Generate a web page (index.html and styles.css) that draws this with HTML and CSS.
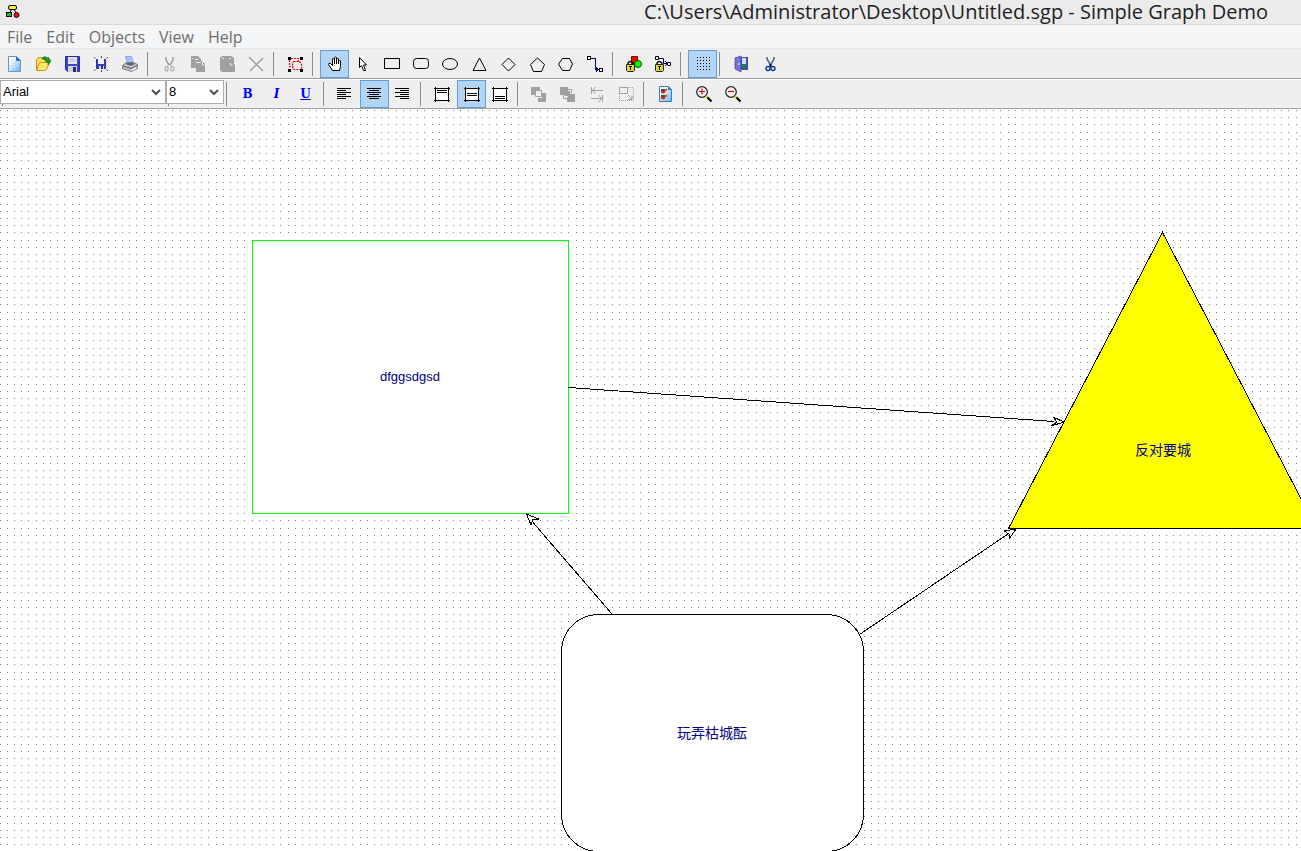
FILE: index.html
```html
<!DOCTYPE html>
<html lang="en">
<head>
<meta charset="utf-8">
<title>Simple Graph Demo</title>
<link rel="stylesheet" href="styles.css">
</head>
<body>
<div class="window">
  <header class="titlebar">
    <svg class="app-icon" viewBox="0 0 14 14" aria-hidden="true">
      <path d="M6 4L3 9M8 4l3 6" stroke="#000080"/>
      <rect x="2.500" y=".5" width="8" height="4" rx="1.500" fill="#ff0" stroke="#000"/>
      <rect x=".5" y="7.500" width="5" height="4" fill="#0c2" stroke="#000"/>
      <circle cx="10.500" cy="10" r="2.500" fill="#f01010" stroke="#400"/>
    </svg>
    <h1 class="title">C:\Users\Administrator\Desktop\Untitled.sgp - Simple Graph Demo</h1>
  </header>

  <nav class="menubar" aria-label="Main menu">
    <button class="menu">File</button>
    <button class="menu">Edit</button>
    <button class="menu">Objects</button>
    <button class="menu">View</button>
    <button class="menu">Help</button>
  </nav>

  <div class="toolbar" role="toolbar" aria-label="Standard">
    <button class="tool" aria-label="New"><svg viewBox="0 0 29 28"><defs><linearGradient id="page" x1="0" y1="0" x2="1" y2="1"><stop offset=".2" stop-color="#fff"/><stop offset="1" stop-color="#62b4ee"/></linearGradient></defs><path d="M8.500 6.500h8l4 4v11h-12z" fill="url(#page)" stroke="#6b94c4"/><path d="M16.500 6.500v4h4" fill="#2b79c4" stroke="#3576b5"/></svg></button>
    <button class="tool" aria-label="Open"><svg viewBox="0 0 29 28"><path d="M7.500 20.500v-11l2-2h3l1 2h5v3" fill="#fbdc62" stroke="#c48c10"/><path d="M7.500 20.500l3-8h10l-3 7-2 1z" fill="#ffe96b" stroke="#d09614"/><path d="M13 8q4-3 6 1v-2l3 4-3 4v-3q-2 1-3-2z" fill="#1f9a1c" stroke="#0b6512" stroke-width=".6"/></svg></button>
    <button class="tool" aria-label="Save"><svg viewBox="0 0 29 28"><path d="M7.500 6.500h14v15h-12l-2-2z" fill="#4246be" stroke="#2b2b9b"/><path d="M10 7h9v7h-9z" fill="#e4e8f4"/><path d="M11 9h7M11 11h7" stroke="#b8bcc8"/><path d="M10 16h9v6h-9z" fill="#cfd2dd"/><path d="M15 17h3v5h-3z" fill="#26267c"/></svg></button>
    <button class="tool" aria-label="Save as"><svg viewBox="0 0 29 28"><path d="M9.500 9.500h9v9h-9z" fill="#3a40b4" stroke="#3333a0"/><path d="M11 9h6v5h-6z" fill="#edf0ff"/><path d="M12 16h5v3h-5z" fill="#d6daf0"/><path d="M14 16h2v3h-2z" fill="#2a2a8c"/><path d="M7 7l1.500 1.500M14.500 6v2M21 7l-1.500 1.500M7 21l1.500-1.500M14.500 20v2M21 21l-1.500-1.500" stroke="#334a80"/></svg></button>
    <button class="tool" aria-label="Print"><svg viewBox="0 0 29 28"><path d="M9.500 6.500h6l2 7h-6z" fill="#a9c3ff" stroke="#8ba8f0"/><path d="M6.500 15.500l4-3h7l4 2v4l-6 3-9-3z" fill="#c4c7cd" stroke="#777b82"/><path d="M7 16l8 2.500 6-3" fill="none" stroke="#54585f"/><path d="M11 13h6l2 1-4 2-6-2z" fill="#666a70"/><path d="M16 20l4-2" stroke="#f4f4f4" stroke-width="1.500"/></svg></button>
    <span class="sep"></span>
    <button class="tool gray" aria-label="Cut"><svg viewBox="0 0 29 28"><path d="M11 7v3l3 5M18 7v3l-3 5" class="thick"/><path d="M14 14l-2 3h-2v3l1 1h2v-4M15 14l2 3h2v3l-1 1h-2v-4" class="line"/></svg></button>
    <button class="tool gray" aria-label="Copy"><svg viewBox="0 0 29 28"><path d="M7 6h7l3 3v2h-3v7H7z"/><path d="M12 11h6l3 3v8h-9z"/><path d="M8 8.500h1M11 9.500h3M12 12.500h5M18.500 12v3h2" fill="none" stroke="#efefef"/></svg></button>
    <button class="tool gray" aria-label="Paste"><svg viewBox="0 0 29 28"><path d="M7 8l2-2h9l3 2v6l1 1v7H9l-2-2z"/><path d="M9 8.500h2M16 8.500h2M17.500 13v2h2" stroke="#efefef" fill="none"/></svg></button>
    <button class="tool gray" aria-label="Delete"><svg viewBox="0 0 29 28"><path d="M7 7l14 14M21 8L8 21" class="thick"/></svg></button>
    <span class="sep"></span>
    <button class="tool" aria-label="Select all"><svg viewBox="0 0 29 28"><path d="M10 8.500h7.500v4M8.500 10v6.500h4M12.500 11.500h6l2 2v6h-8l-1-3v-3z" fill="none" stroke="#f00" stroke-width="1.200" stroke-dasharray="2 1"/><path d="M7 7h3v3H7zM19 7h3v3h-3zM7 19h3v3H7zM19 19h3v3h-3z"/></svg></button>
    <span class="sep"></span>
    <button class="tool pressed" aria-label="Pan" aria-pressed="true"><svg viewBox="0 0 29 28"><path d="M12.500 20.500l-4-6q0-2 2-1l2 2V9q1-2 2 0V7.500q1-1 2 0V9q1-2 2 0v2q1-2 2 0v5.500l-1 4z" fill="#fff" stroke="#000"/><path d="M14.500 9v5M16.500 9v5M18.500 11v3" stroke="#000"/></svg></button>
    <button class="tool" aria-label="Select"><svg viewBox="0 0 29 28"><path d="M10.500 7.500v10l2-2 2 5h2l-2-5.500h3z" fill="#fff" stroke="#000"/></svg></button>
    <button class="tool" aria-label="Rectangle"><svg viewBox="0 0 29 28"><path d="M6.500 8.500h15v10h-15z" class="shape"/></svg></button>
    <button class="tool" aria-label="Rounded rectangle"><svg viewBox="0 0 29 28"><rect x="6.500" y="8.500" width="15" height="10" rx="3" class="shape"/></svg></button>
    <button class="tool" aria-label="Ellipse"><svg viewBox="0 0 29 28"><ellipse cx="14" cy="14" rx="7.500" ry="5.500" class="shape"/></svg></button>
    <button class="tool" aria-label="Triangle"><svg viewBox="0 0 29 28"><path d="M14.500 8L21 20.500H8z" class="shape"/></svg></button>
    <button class="tool" aria-label="Diamond"><svg viewBox="0 0 29 28"><path d="M14.500 8l6.500 6.500-6.500 6.500L8 14.500z" class="shape"/></svg></button>
    <button class="tool" aria-label="Pentagon"><svg viewBox="0 0 29 28"><path d="M14.500 8l7 6.500-3 7h-8l-3-7z" class="shape"/></svg></button>
    <button class="tool" aria-label="Hexagon"><svg viewBox="0 0 29 28"><path d="M10.500 8.500h7l3 5.500-3 6.500h-7L6.500 14z" class="shape"/></svg></button>
    <button class="tool" aria-label="Link"><svg viewBox="0 0 29 28" shape-rendering="crispEdges"><path d="M10 8.500h4.500v11H18M15.500 17v5M16.500 18v3" fill="none" stroke="#000090"/><path d="M6.500 6.500h3v3h-3zM18.500 18.500h3v3h-3z" fill="#fff" stroke="#000"/></svg></button>
    <span class="sep"></span>
    <button class="tool" aria-label="Lock objects"><svg viewBox="0 0 29 28"><path d="M11.500 6.500h6v7h-6z" fill="#f00" stroke="#800"/><circle cx="18" cy="14" r="3.500" fill="#0f0" stroke="#050"/><path d="M8 15v-2q2-3 5 0v2" fill="none" stroke="#111" stroke-width="1.500"/><path d="M6.500 14.500h8v6l-1 1h-6l-1-1z" fill="#e4d738" stroke="#222"/><path d="M9 16.500h3M10.500 16v4" stroke="#000"/></svg></button>
    <button class="tool" aria-label="Lock links"><svg viewBox="0 0 29 28"><path d="M10 8.500h4.500v5H18M16 11l2.500 2.500L16 16" fill="none" stroke="#000090"/><path d="M6.500 6.500h3v3h-3zM18.500 12.500h3v3h-3z" fill="#fff" stroke="#000"/><path d="M8 15v-2q2-3 5 0v2" fill="none" stroke="#111" stroke-width="1.500"/><path d="M6.500 14.500h8v6l-1 1h-6l-1-1z" fill="#e4d738" stroke="#222"/><path d="M9 16.500h3M10.500 16v4" stroke="#000"/></svg></button>
    <span class="sep"></span>
    <button class="tool pressed" aria-label="Show grid" aria-pressed="true"><svg viewBox="0 0 29 28" shape-rendering="crispEdges"><path d="M9 7.500h13M9 10.500h13M9 13.500h13M9 16.500h13M9 19.500h13" stroke="#000" stroke-dasharray="1 2"/></svg></button>
    <span class="sep"></span>
    <button class="tool" aria-label="Exit"><svg viewBox="0 0 29 28"><path d="M12 7h9v13h-9z" fill="#4a49b8"/><path d="M15 8h4v6h-4z" fill="#c9e3ff"/><path d="M15 14h4v4h-4z" fill="#168348"/><path d="M8 8l6-2v16l-6-3z" fill="#7774d9" stroke="#3d3b9c" stroke-width=".7"/><path d="M12 13v2" stroke="#fff"/></svg></button>
    <button class="tool" aria-label="Scissors"><svg viewBox="0 0 29 28"><path d="M11 7v2l3.500 6M18 7v2l-3.500 6" fill="none" stroke="#5f7690" stroke-width="1.800"/><path d="M14.500 14v3" stroke="#113" stroke-width="2"/><circle cx="12" cy="18.500" r="2" fill="none" stroke="#0a3c9c" stroke-width="1.400"/><circle cx="17" cy="18.500" r="2" fill="none" stroke="#0a3c9c" stroke-width="1.400"/></svg></button>
  </div>

  <div class="toolbar format" role="toolbar" aria-label="Format">
    <div class="combo font"><select aria-label="Font name"><option>Arial</option></select><svg class="chevron" viewBox="0 0 10 8" aria-hidden="true"><path d="M1 1l4 4 4-4"/></svg></div>
    <div class="combo size"><select aria-label="Font size"><option>8</option></select><svg class="chevron" viewBox="0 0 10 8" aria-hidden="true"><path d="M1 1l4 4 4-4"/></svg></div>
    <span class="sep"></span>
    <button class="tool letter" aria-label="Bold"><b>B</b></button>
    <button class="tool letter" aria-label="Italic"><i>I</i></button>
    <button class="tool letter" aria-label="Underline"><u>U</u></button>
    <span class="sep"></span>
    <button class="tool" aria-label="Align left"><svg viewBox="0 0 29 28"><path d="M6 8.500h14M6 10.500h9M6 12.500h14M6 14.500h9M6 16.500h14M6 18.500h9" class="shape"/></svg></button>
    <button class="tool pressed" aria-label="Align center" aria-pressed="true"><svg viewBox="0 0 29 28"><path d="M7 8.500h14M9 10.500h10M7 12.500h14M9 14.500h10M7 16.500h14M9 18.500h10" class="shape"/></svg></button>
    <button class="tool" aria-label="Align right"><svg viewBox="0 0 29 28"><path d="M6 8.500h14M11 10.500h9M6 12.500h14M11 14.500h9M6 16.500h14M11 18.500h9" class="shape"/></svg></button>
    <span class="sep"></span>
    <button class="tool" aria-label="Align top"><svg viewBox="0 0 29 28"><path d="M8 8h12v12H8z" fill="#fff"/><path d="M6 8.500h16M6 20.500h16M7.500 7v15M20.500 7v15M9 10.500h10M9 12.500h10" class="shape"/></svg></button>
    <button class="tool pressed" aria-label="Align middle" aria-pressed="true"><svg viewBox="0 0 29 28"><path d="M9 8h12v12H9z" fill="#fff"/><path d="M7 8.500h16M7 20.500h16M8.500 7v15M21.500 7v15M10 13.500h10M10 15.500h10" class="shape"/></svg></button>
    <button class="tool" aria-label="Align bottom"><svg viewBox="0 0 29 28"><path d="M8 8h12v12H8z" fill="#fff"/><path d="M6 8.500h16M6 20.500h16M7.500 7v15M20.500 7v15M9 16.500h10M9 18.500h10" class="shape"/></svg></button>
    <span class="sep"></span>
    <button class="tool gray" aria-label="Bring to front"><svg viewBox="0 0 29 28"><path d="M6 7h9v3h-2v5H6z"/><path d="M10.500 10.500h6v6h-6z" fill="#efefef" stroke="#a0a0a0"/><path d="M17 13h4v9h-8v-4h4z"/></svg></button>
    <button class="tool gray" aria-label="Send to back"><svg viewBox="0 0 29 28"><path d="M6 7h8v8H6z"/><path d="M14 9.500h3.500v4M9.500 15v3.500h4" class="line"/><path d="M14 14h7v8h-8v-5h1z"/><path d="M11 11h5v5h-5z"/></svg></button>
    <button class="tool gray" aria-label="Align objects"><svg viewBox="0 0 29 28"><path d="M8.500 7v7M19.500 15v7M9 10.500h11M12.500 7l-3 3.500 3 3.500M8 18.500h11M15.500 15l3 3.500-3 3.500" class="line"/></svg></button>
    <button class="tool gray" aria-label="Resize objects"><svg viewBox="0 0 29 28"><path d="M7.500 7.500h8v6h-8zM16 15l4 4M20 15.500v4h-4" class="line"/><path d="M16 7.500h6M21.500 8v14M7 20.500h14M7.500 14v6" class="line" stroke-dasharray="1 1"/></svg></button>
    <span class="sep"></span>
    <button class="tool" aria-label="Properties"><svg viewBox="0 0 29 28"><path d="M8.500 6.500h9l3 3v12h-12z" fill="url(#page)" stroke="#3b78bc"/><path d="M17 6.500v3.500h3.500" fill="#2b79c4"/><path d="M10 9h4v4h-4zM10 15h4v4h-4z" fill="#444"/><path d="M10 11l2 2 4-4M10 17l2 2 4-4" fill="none" stroke="#e33b12" stroke-width="1.500"/></svg></button>
    <span class="sep"></span>
    <button class="tool" aria-label="Zoom in"><svg viewBox="0 0 29 28"><circle cx="12" cy="12" r="5.300" fill="#f4f4f4" stroke="#222" stroke-width="1.200"/><path d="M9 11.500h6M12 8.500v6" stroke="#e00000" stroke-width="1.200"/><path d="M16 16l2 2" stroke="#e1d21a" stroke-width="2.500"/><path d="M17.500 17.500l4 4" stroke="#000" stroke-width="2.200"/></svg></button>
    <button class="tool" aria-label="Zoom out"><svg viewBox="0 0 29 28"><circle cx="12" cy="12" r="5.300" fill="#f4f4f4" stroke="#222" stroke-width="1.200"/><path d="M9 11.500h6" stroke="#e00000" stroke-width="1.200"/><path d="M16 16l2 2" stroke="#e1d21a" stroke-width="2.500"/><path d="M17.500 17.500l4 4" stroke="#000" stroke-width="2.200"/></svg></button>
  </div>

  <main class="canvas">
    <svg class="graph" role="img" aria-label="Graph">
      <defs>
        <pattern id="grid" x="0" y="23" width="36" height="36" patternUnits="userSpaceOnUse">
          <path d="M0 .5h1m6 0h1m6 0h1m6 0h1m6 0h1M0 7.500h1m6 0h1m6 0h1m6 0h1m6 0h1M0 14.500h1m6 0h1m6 0h1m6 0h1m6 0h1M0 21.500h1m6 0h1m6 0h1m6 0h1m6 0h1M0 28.500h1m6 0h1m6 0h1m6 0h1m6 0h1" stroke="#808080" shape-rendering="crispEdges"/>
        </pattern>
      </defs>
      <rect width="100%" height="100%" fill="url(#grid)"/>
      <g class="node" shape-rendering="crispEdges">
        <rect x="252.500" y="131.500" width="316" height="273" fill="#fff" stroke="#0f0"/>
        <path d="M1162.500 123.500L1316.500 419.500H1008.500z" fill="#ff0" stroke="#000"/>
        <rect x="561.500" y="505.500" width="302" height="237" rx="37" fill="#fff" stroke="#000"/>
      </g>
      <g class="links" fill="none" stroke="#000" shape-rendering="crispEdges">
        <path d="M568.500 278.500L1054 312.500"/>
        <path d="M1064 313l-11-5 4 5-6 4z" fill="#fff"/>
        <path d="M612 505L533 413.500"/>
        <path d="M526.500 405l4.500 11 1.500-5 6-1z" fill="#fff"/>
        <path d="M859.500 525.500L1008 425"/>
        <path d="M1016 420l-12 2 5 3v5z"/>
      </g>
      <g class="label">
        <text x="410" y="272">dfggsdgsd</text>
        <text class="cjk" x="1163" y="346">反对要城</text>
        <text class="cjk" x="712" y="629">玩弄枯城酝</text>
      </g>
    </svg>
  </main>
</div>
</body>
</html>
```
FILE: styles.css
```css
* {
  box-sizing: border-box;
}

body {
  margin: 0;
  font-family: "Open Sans", "Noto Sans CJK SC", sans-serif;
}

button,
select {
  margin: 0;
  padding: 0;
  border: 0;
  background: none;
  font: inherit;
  color: inherit;
}

.window {
  display: flex;
  flex-direction: column;
  height: 100vh;
  overflow: hidden;
  background: #fff;
}

.titlebar {
  display: flex;
  align-items: center;
  justify-content: space-between;
  height: 25px;
  padding: 0 33px 0 6px;
  background: #ebebeb;
  border-bottom: 1px solid #d9d9d9;
}

.app-icon {
  width: 14px;
  height: 14px;
}

.title {
  margin: 0;
  font-size: 20px;
  line-height: 24px;
  font-weight: 400;
  color: #222;
  white-space: nowrap;
}

.menubar {
  display: flex;
  height: 24px;
  background: #f4f5f7;
  border-bottom: 1px solid #e8e8e8;
}

.menu {
  padding: 2px 7px 0;
  font-size: 16px;
  line-height: 21px;
  color: #6d6d6d;
}

.toolbar {
  display: flex;
  height: 30px;
  padding-top: 1px;
  background: #efefef;
  border-bottom: 1px solid #a0a0a0;
}

.format {
  border-top: 1px solid #fff;
  padding-top: 0;
}

.tool {
  display: block;
  flex: none;
  width: 29px;
  height: 28px;
  overflow: hidden;
}

.tool svg {
  display: block;
  width: 29px;
  height: 28px;
}

.pressed {
  background: #b3d4f3;
  box-shadow: inset 0 0 0 1px #5a9fe0;
}

.sep {
  flex: none;
  width: 10px;
  height: 24px;
  margin-top: 2px;
  border-left: 2px solid transparent;
  background: linear-gradient(#8c8c8c, #8c8c8c) no-repeat 0 0 / 1px 100%;
}

.shape {
  fill: none;
  stroke: #000;
}

.gray svg {
  fill: #a0a0a0;
}

.gray .line {
  fill: none;
  stroke: #a0a0a0;
}

.gray .thick {
  fill: none;
  stroke: #a0a0a0;
  stroke-width: 1.500;
}

.letter {
  padding-right: 2px;
  font-family: "DejaVu Serif", serif;
  font-size: 12px;
  line-height: 28px;
  font-weight: 700;
  color: #00f;
  text-align: center;
}

.combo {
  position: relative;
  flex: none;
  height: 24px;
}

.font {
  width: 166px;
}

.size {
  width: 58px;
}

.combo select {
  display: block;
  width: 100%;
  height: 24px;
  padding: 0 0 2px 2px;
  border: 1px solid #abadb3;
  border-radius: 0;
  background: #fff;
  appearance: none;
  font-family: "Liberation Sans", Arial, sans-serif;
  font-size: 13px;
  color: #000;
}

.combo::after {
  content: "";
  display: block;
  width: 1px;
  height: 2px;
  margin-left: 2px;
  background: #808080;
}

.chevron {
  position: absolute;
  top: 9px;
  right: 5px;
  width: 10px;
  height: 8px;
  fill: none;
  stroke: #505050;
  stroke-width: 2;
  pointer-events: none;
}

.canvas {
  flex: 1;
  min-height: 0;
  background: #fff;
}

.graph {
  display: block;
  width: 100%;
  height: 100%;
}

.label {
  fill: #000080;
  font-family: "Liberation Sans", Arial, sans-serif;
  font-size: 13px;
  text-anchor: middle;
}

.cjk {
  font-family: "Noto Sans CJK SC", sans-serif;
  font-size: 14px;
}
```
